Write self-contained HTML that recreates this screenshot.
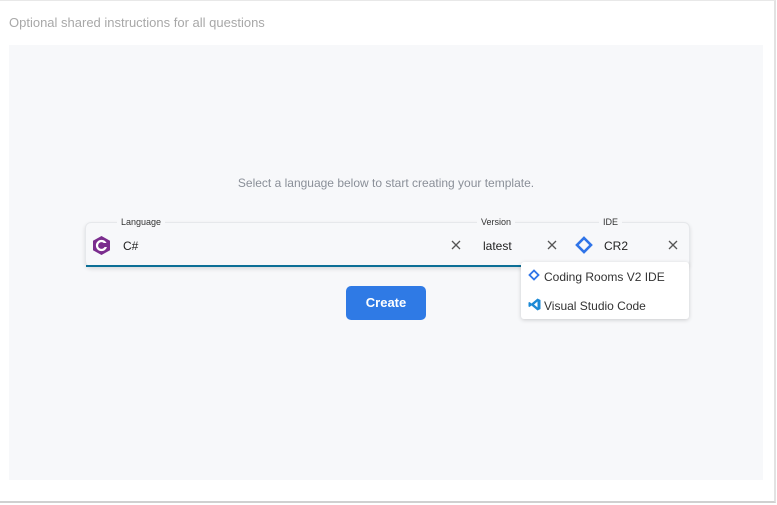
<!DOCTYPE html>
<html><head><style>
body{margin:0;width:777px;height:505px;background:#fff;font-family:"Liberation Sans",sans-serif;position:relative;overflow:hidden}
.frame{position:absolute;left:0;top:0;width:776px;height:503px;border-right:2px solid #e2e2e2;border-bottom:2px solid #d0d0d0;border-top:1px solid #e8e8e8;box-sizing:border-box}
.t{position:absolute;left:9px;top:15px;font-size:13px;color:#a8a8a8}
.panel{position:absolute;left:9px;top:45px;width:754px;height:435px;background:#f7f8fa}
.hint{position:absolute;left:0;width:772px;top:176px;text-align:center;font-size:12px;color:#8a8f98}
.field{position:absolute;left:85px;top:222px;width:605px;height:45px;background:#f7f8fa;border:1px solid #e6e8eb;border-radius:6px;box-sizing:border-box;box-shadow:0 2px 4px rgba(0,0,0,.12)}
.ul{position:absolute;left:86px;top:265px;width:436px;height:2px;background:#0c6f96}
.lbl{position:absolute;top:217px;font-size:9px;color:#333;background:#f7f8fa;padding:0 4px}
.v{position:absolute;top:239px;font-size:12px;color:#222}
.x{position:absolute;top:240px}
.dd{position:absolute;left:521px;top:262px;width:168px;height:57px;background:#fff;box-shadow:0 1px 4px rgba(0,0,0,.18);border-radius:3px}
.dd div{position:absolute;left:23px;font-size:12px;color:#333}
.btn{position:absolute;left:346px;top:286px;width:80px;height:34px;background:#2f7ae5;border-radius:5px;color:#fff;font-weight:bold;font-size:13px;text-align:center;line-height:34px}
</style></head><body>
<div class="frame"></div>
<div class="t">Optional shared instructions for all questions</div>
<div class="panel"></div>
<div class="hint">Select a language below to start creating your template.</div>
<div class="field"></div>
<div class="ul"></div>
<span class="lbl" style="left:117px">Language</span>
<span class="lbl" style="left:477px">Version</span>
<span class="lbl" style="left:599px">IDE</span>
<svg style="position:absolute;left:93px;top:236px" width="17" height="19" viewBox="0 0 17 19"><polygon points="8.5,0 17,4.75 17,14.25 8.5,19 0,14.25 0,4.75" fill="#7b2d8e"/><circle cx="8.5" cy="9.5" r="4.5" fill="none" stroke="#fff" stroke-width="2.2"/><rect x="10" y="7" width="6" height="4" fill="#7b2d8e"/></svg>
<span class="v" style="left:123px">C#</span>
<svg class="x" style="left:451px" width="10" height="10"><path d="M1 1L9 9M9 1L1 9" stroke="#555" stroke-width="1.3"/></svg>
<span class="v" style="left:483px">latest</span>
<svg class="x" style="left:547px" width="10" height="10"><path d="M1 1L9 9M9 1L1 9" stroke="#555" stroke-width="1.3"/></svg>
<svg style="position:absolute;left:575px;top:236px" width="18" height="18" viewBox="0 0 18 18"><path d="M9 2 L16 9 L9 16 L2 9 Z" fill="none" stroke="#2f74e8" stroke-width="2.6"/></svg>
<span class="v" style="left:604px">CR2</span>
<svg class="x" style="left:668px" width="10" height="10"><path d="M1 1L9 9M9 1L1 9" stroke="#555" stroke-width="1.3"/></svg>
<div class="btn">Create</div>
<div class="dd">
<svg style="position:absolute;left:7px;top:7px" width="12" height="12" viewBox="0 0 12 12"><path d="M6 1.5 L10.5 6 L6 10.5 L1.5 6 Z" fill="none" stroke="#2f74e8" stroke-width="1.8"/></svg>
<div style="top:8px">Coding Rooms V2 IDE</div>
<svg style="position:absolute;left:7px;top:36px" width="13" height="13" viewBox="0 0 13 13"><path d="M9.5 0.5 L12.5 2 V11 L9.5 12.5 L3.5 7.5 L1.5 9 L0.5 8.5 V4.5 L1.5 4 L3.5 5.5 Z M9.5 3.5 L6 6.5 L9.5 9.5 Z" fill="#1c8ad6" fill-rule="evenodd"/></svg>
<div style="top:37px">Visual Studio Code</div>
</div>
</body></html>
